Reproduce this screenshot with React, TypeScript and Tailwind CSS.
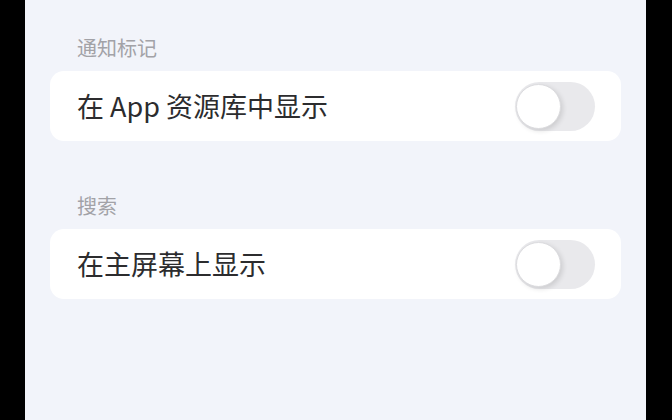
import React from 'react';

const SECTIONS = [
  { title: '通知标记', label: '在 App 资源库中显示' },
  { title: '搜索', label: '在主屏幕上显示' },
];

function Toggle() {
  return (
    <div className="relative w-[80px] h-[49px] rounded-full bg-[#e9e9ec] shrink-0">
      <div className="absolute left-[1px] top-[2px] w-[45px] h-[45px] rounded-full bg-white border border-[#dcdcdf] shadow-[2px_2px_5px_rgba(0,0,0,0.12)]" />
    </div>
  );
}

export default function App() {
  return (
    <div
      className="w-[672px] h-[420px] bg-black flex overflow-hidden"
      style={{ fontFamily: '"Noto Sans CJK SC", "Noto Sans", sans-serif' }}
    >
      <div className="ml-[25px] w-[621px] h-full bg-[#f2f4fa] px-[25px] pt-[36px]">
        {SECTIONS.map((s, i) => (
          <div key={s.title} className={i > 0 ? 'mt-[53px]' : ''}>
            <p className="pl-[27px] text-[20px] leading-[24px] text-[#a2a2a7] mb-[11px]">{s.title}</p>
            <div className="h-[70px] bg-white rounded-[14px] flex items-center justify-between pl-[27px] pr-[26px]">
              <span className="text-[27px] leading-[32px] text-[#2c2c2e]">{s.label}</span>
              <Toggle />
            </div>
          </div>
        ))}
      </div>
    </div>
  );
}
